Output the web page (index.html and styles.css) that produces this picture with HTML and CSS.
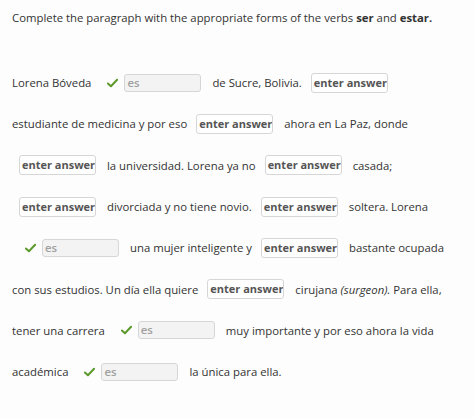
FILE: index.html
```html
<!DOCTYPE html>
<html>
<head>
<meta charset="utf-8">
<link rel="stylesheet" href="styles.css">
</head>
<body>
<div class="page">
  <p class="prompt">Complete the paragraph with the appropriate forms of the verbs <b>ser</b> and <b>estar.</b></p>
  <div class="para">
    <div class="row">
      <span>Lorena Bóveda</span>
      <span class="blank done"><svg class="check" viewBox="0 0 12 10"><path d="M1 5.5 L4.3 8.5 L11 1.5" /></svg><span class="box filled">es</span></span>
      <span>de Sucre, Bolivia.</span>
      <span class="blank"><span class="box">enter answer</span></span>
    </div>
    <div class="row">
      <span>estudiante de medicina y por eso</span>
      <span class="blank"><span class="box">enter answer</span></span>
      <span>ahora en La Paz, donde</span>
    </div>
    <div class="row">
      <span class="blank first"><span class="box">enter answer</span></span>
      <span>la universidad. Lorena ya no</span>
      <span class="blank"><span class="box">enter answer</span></span>
      <span>casada;</span>
    </div>
    <div class="row">
      <span class="blank first"><span class="box">enter answer</span></span>
      <span>divorciada y no tiene novio.</span>
      <span class="blank"><span class="box">enter answer</span></span>
      <span>soltera. Lorena</span>
    </div>
    <div class="row">
      <span class="blank done first-check"><svg class="check" viewBox="0 0 12 10"><path d="M1 5.5 L4.3 8.5 L11 1.5" /></svg><span class="box filled">es</span></span>
      <span>una mujer inteligente y</span>
      <span class="blank"><span class="box">enter answer</span></span>
      <span>bastante ocupada</span>
    </div>
    <div class="row">
      <span>con sus estudios. Un día ella quiere</span>
      <span class="blank"><span class="box">enter answer</span></span>
      <span>cirujana <i>(surgeon).</i> Para ella,</span>
    </div>
    <div class="row">
      <span>tener una carrera</span>
      <span class="blank done"><svg class="check" viewBox="0 0 12 10"><path d="M1 5.5 L4.3 8.5 L11 1.5" /></svg><span class="box filled">es</span></span>
      <span>muy importante y por eso ahora la vida</span>
    </div>
    <div class="row">
      <span>académica</span>
      <span class="blank done"><svg class="check" viewBox="0 0 12 10"><path d="M1 5.5 L4.3 8.5 L11 1.5" /></svg><span class="box filled">es</span></span>
      <span>la única para ella.</span>
    </div>
  </div>
</div>
</body>
</html>
```

FILE: styles.css
```css
html, body {
  margin: 0;
  padding: 0;
  background: #fdfdfd;
}
body {
  width: 474px;
  height: 418px;
  overflow: hidden;
  font-family: "Open Sans", "DejaVu Sans", sans-serif;
  font-size: 11.35px;
  color: #333;
}
.page {
  padding: 0 12px;
}
.prompt {
  margin: 0;
  padding-top: 10px;
  line-height: 16px;
  height: 52px;
}
.prompt b {
  font-weight: 700;
}
.para {
  display: flex;
  flex-direction: column;
}
.row {
  display: flex;
  align-items: center;
  height: 41.3px;
  white-space: nowrap;
}
.blank {
  display: inline-flex;
  align-items: center;
  margin: 0 11px 0 9px;
}
.blank.first {
  margin-left: 7px;
}
.blank.done {
  margin-left: 16px;
}
.blank.first-check {
  margin-left: 13px;
}
.check {
  width: 11px;
  height: 10px;
  margin-right: 6px;
  fill: none;
  stroke: #5c9a2c;
  stroke-width: 2.2;
  stroke-linecap: round;
  stroke-linejoin: round;
}
.box {
  display: inline-block;
  box-sizing: border-box;
  width: 77px;
  height: 20px;
  line-height: 18px;
  padding: 0 2px;
  border: 1px solid #d6d6d6;
  border-radius: 3px;
  background: #fff;
  color: #555;
  font-weight: 700;
  font-size: 11px;
  overflow: hidden;
}
.box.filled {
  height: 18px;
  line-height: 16px;
  background: #f3f3f3;
  color: #a0a0a0;
  font-weight: 600;
  font-size: 11.35px;
}
```
